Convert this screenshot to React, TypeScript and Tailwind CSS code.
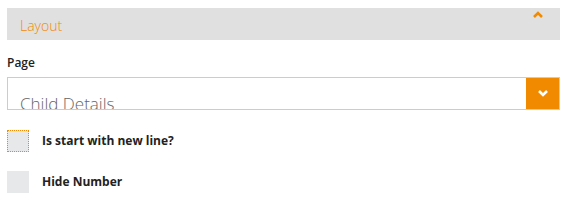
import React from "react";

function Chevron({ up, className }: { up?: boolean; className?: string }) {
  return (
    <svg width="10" height="7" viewBox="0 0 10 7" className={className}>
      {up ? (
        <path d="M1 6 L5 2 L9 6" fill="none" stroke="currentColor" strokeWidth="2.6" strokeLinejoin="miter" />
      ) : (
        <path d="M1 1 L5 5 L9 1" fill="none" stroke="currentColor" strokeWidth="2.6" strokeLinejoin="miter" />
      )}
    </svg>
  );
}

export default function App() {
  return (
    <div className="w-[567px] h-[208px] bg-white pt-[8px] pl-[7px] pr-[7px]" style={{ fontFamily: '"Open Sans", "Noto Sans", sans-serif' }}>
      <div className="relative h-[32px] bg-[#e0e0e0] flex items-center pl-[13px] pt-[3px]">
        <span className="text-[14px] text-[#f28a00] font-light leading-none">Layout</span>
        <Chevron up className="absolute right-[17px] top-[3px] text-[#f28a00]" />
      </div>
      <div className="mt-[15px] text-[12px] font-semibold text-[#222] leading-[16px]">Page</div>
      <div className="mt-[6px] h-[33px] border border-[#cccccc] flex overflow-hidden">
        <div className="flex-1 relative overflow-hidden">
          <span className="absolute left-[12px] top-[17px] text-[17px] font-light text-[#666] leading-none whitespace-nowrap">Child Details</span>
        </div>
        <div className="w-[33px] bg-[#f28a00] flex items-center justify-center text-white">
          <Chevron />
        </div>
      </div>
      <div className="mt-[20px] flex items-center gap-[13px]">
        <div className="w-[22px] h-[22px] bg-[#e6e8ea] border border-dotted border-[#f28a00]" />
        <span className="text-[12px] font-bold text-[#222]">Is start with new line?</span>
      </div>
      <div className="mt-[19px] flex items-center gap-[13px]">
        <div className="w-[22px] h-[22px] bg-[#e6e8ea]" />
        <span className="text-[12px] font-bold text-[#222]">Hide Number</span>
      </div>
    </div>
  );
}
